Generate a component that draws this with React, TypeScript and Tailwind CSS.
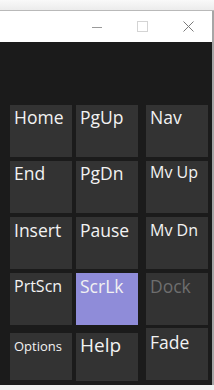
import React from "react";

type Key = {
  label: string;
  size?: string;
  pt?: string;
  bg?: string;
  color?: string;
  h?: string;
  mt?: string;
};

const columns: Key[][] = [
  [
    { label: "Home" },
    { label: "End" },
    { label: "Insert", pt: "pt-[2px]" },
    { label: "PrtScn", size: "text-[16px]", pt: "pt-[2px]" },
    { label: "Options", size: "text-[13px]", pt: "pt-[2px]", h: "h-[47px]", mt: "mt-[4px]" },
  ],
  [
    { label: "PgUp" },
    { label: "PgDn" },
    { label: "Pause", pt: "pt-[2px]" },
    { label: "ScrLk", pt: "pt-[2px]", bg: "bg-[#8f8cd9]" },
    { label: "Help", size: "text-[19px]", pt: "pt-[1px]", h: "h-[48px]", mt: "mt-[4px]" },
  ],
  [
    { label: "Nav" },
    { label: "Mv Up", size: "text-[16px]", pt: "pt-[0px]" },
    { label: "Mv Dn", size: "text-[16px]", pt: "pt-[2px]" },
    { label: "Dock", pt: "pt-[2px]", color: "text-[#6e6e6e]" },
    { label: "Fade", pt: "pt-[3px]", h: "h-[52px]", mt: "-mt-[1px]" },
  ],
];

function Tile({ k }: { k: Key }) {
  return (
    <div
      className={`w-[62px] ${k.h ?? "h-[52px]"} ${k.mt ?? ""} ${k.bg ?? "bg-[#333333]"} ${k.pt ?? "pt-[1px]"} px-[4px]`}
    >
      <span className={`block leading-[22px] whitespace-nowrap ${k.size ?? "text-[17.5px]"} ${k.color ?? "text-[#f2f2f2]"}`}>
        {k.label}
      </span>
    </div>
  );
}

export default function App() {
  return (
    <div
      className="w-[214px] h-[390px] bg-[#f0f0f0] flex flex-col overflow-hidden"
      style={{ fontFamily: '"Open Sans", "Noto Sans", sans-serif' }}
    >
      <div className="h-[10px] bg-gradient-to-b from-[#f9f9f9] to-[#ececec]" />
      <div className="h-px bg-[#b9b9b9]" />
      <div className="flex flex-1">
        <div className="w-[212px] flex flex-col">
          {/* title bar */}
          <div className="h-[31px] bg-white flex items-center">
            <div className="flex-1" />
            <svg width="10" height="10" viewBox="0 0 10 10" className="mr-[35px]">
              <line x1="0" y1="5.5" x2="10" y2="5.5" stroke="#9a9a9a" strokeWidth="1" />
            </svg>
            <svg width="11" height="11" viewBox="0 0 11 11" className="mr-[35px]">
              <rect x="0.5" y="0.5" width="10" height="10" fill="none" stroke="#d4d4d4" strokeWidth="1" />
            </svg>
            <svg width="11" height="11" viewBox="0 0 11 11" className="mr-[18px]">
              <path d="M0.5 0.5 L10.5 10.5 M10.5 0.5 L0.5 10.5" stroke="#7a7a7a" strokeWidth="1" />
            </svg>
          </div>
          {/* key pad */}
          <div className="flex-1 bg-[#1b1b1b] pt-[63px] pl-[10px] flex">
            {columns.map((col, ci) => (
              <div key={ci} className={`flex flex-col gap-[4px] ${ci === 0 ? "mr-[4px]" : ci === 1 ? "mr-[8px]" : ""}`}>
                {col.map((k) => (
                  <Tile key={k.label} k={k} />
                ))}
              </div>
            ))}
          </div>
        </div>
        <div className="w-[2px] bg-[#a6a6a6]" />
      </div>
      <div className="h-[5px] bg-[#f0f0f0]" />
    </div>
  );
}
